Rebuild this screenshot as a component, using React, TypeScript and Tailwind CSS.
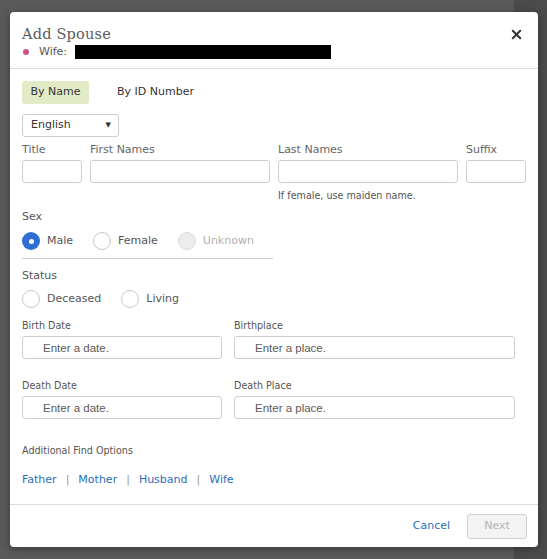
import { X } from 'lucide-react'

function Radio({
  label,
  checked,
  disabled,
}: {
  label: string
  checked?: boolean
  disabled?: boolean
}) {
  return (
    <label className="flex items-center mr-[20px]">
      {checked ? (
        <span className="w-[18px] h-[18px] rounded-full bg-[#2f6fd3] flex items-center justify-center">
          <span className="w-[5px] h-[5px] rounded-full bg-white" />
        </span>
      ) : (
        <span
          className={`w-[18px] h-[18px] rounded-full border ${
            disabled ? 'bg-[#ececec] border-[#dcdcdc]' : 'bg-white border-[#c8c8c8]'
          }`}
        />
      )}
      <span
        className={`ml-[7px] text-[11px] leading-[14px] ${
          disabled ? 'text-[#b0b0b0]' : 'text-[#555]'
        }`}
      >
        {label}
      </span>
    </label>
  )
}

function TextBox({ className = '' }: { className?: string }) {
  return (
    <input
      type="text"
      className={`h-[23px] border border-[#cfcfcf] rounded-[3px] bg-white outline-none ${className}`}
    />
  )
}

function PlaceBox({ placeholder }: { placeholder: string }) {
  return (
    <input
      type="text"
      placeholder={placeholder}
      className="h-[23px] w-full border border-[#cfcfcf] rounded-[3px] bg-white pl-[20px] outline-none font-['Liberation_Sans',Arial,sans-serif] text-[11.5px] placeholder:text-[#5a5a5a]"
    />
  )
}

export default function App() {
  const links = ['Father', 'Mother', 'Husband', 'Wife']

  return (
    <div className="w-[547px] h-[559px] overflow-hidden bg-[linear-gradient(to_right,#5a5a5a_514px,#4b4b4b_514px)] pt-[12px] pl-[10px] font-['DejaVu_Sans',sans-serif]">
      <div className="w-[528px] h-[535px] bg-white rounded-[4px] shadow-[0_2px_8px_rgba(0,0,0,0.35)] flex flex-col">
        {/* Header */}
        <div className="relative px-[12px] pt-[12px] pb-[8px] border-b border-[#dddddd]">
          <h2 className="font-['DejaVu_Serif',serif] text-[14.5px] leading-[20px] text-[#5c5c5c] tracking-[0.2px]">
            Add Spouse
          </h2>
          <div className="flex items-center h-[16px]">
            <span className="w-[6px] h-[6px] rounded-full bg-[#cf4f86] ml-[1px]" />
            <span className="ml-[10px] text-[11px] text-[#555]">Wife:</span>
            <span className="ml-[8px] w-[256px] h-[14px] bg-black" />
          </div>
          <button className="absolute right-[14px] top-[15px] text-[#333]">
            <X className="w-[15px] h-[15px]" strokeWidth={3.2} />
          </button>
        </div>

        {/* Body */}
        <div className="flex-1 px-[12px]">
          <div className="flex items-center mt-[12px]">
            <span className="h-[23px] w-[67px] rounded-[3px] bg-[#e3ebc6] flex items-center justify-center text-[11px] text-[#333]">
              By Name
            </span>
            <span className="ml-[28px] text-[11px] text-[#333]">By ID Number</span>
          </div>

          <div className="mt-[10px] w-[97px] h-[23px] border border-[#cfcfcf] rounded-[3px] flex items-center justify-between pl-[8px] pr-[7px]">
            <span className="text-[11px] text-[#333]">English</span>
            <span className="text-[7px] text-[#333] leading-none">▼</span>
          </div>

          <div className="mt-[6px] grid grid-cols-[60px_180px_180px_60px] gap-x-[8px] text-[11px] text-[#666]">
            <span className="leading-[14px]">Title</span>
            <span className="leading-[14px]">First Names</span>
            <span className="leading-[14px]">Last Names</span>
            <span className="leading-[14px]">Suffix</span>
            <TextBox className="mt-[3px] w-full" />
            <TextBox className="mt-[3px] w-full" />
            <TextBox className="mt-[3px] w-full" />
            <TextBox className="mt-[3px] w-full" />
            <span />
            <span />
            <span className="mt-[7px] text-[9.6px] leading-[12px] text-[#555]">
              If female, use maiden name.
            </span>
          </div>

          <div className="mt-[8px] text-[11px] leading-[14px] text-[#555]">Sex</div>
          <div className="mt-[8px] flex items-center">
            <Radio label="Male" checked />
            <Radio label="Female" />
            <Radio label="Unknown" disabled />
          </div>
          <div className="mt-[8px] w-[251px] border-t border-[#cccccc]" />

          <div className="mt-[10px] text-[11px] leading-[14px] text-[#555]">Status</div>
          <div className="mt-[7px] flex items-center">
            <Radio label="Deceased" />
            <Radio label="Living" />
          </div>

          <div className="mt-[12px] grid grid-cols-[200px_281px] gap-x-[12px] text-[9.6px] leading-[12px] text-[#555]">
            <span>Birth Date</span>
            <span>Birthplace</span>
            <div className="mt-[4px]">
              <PlaceBox placeholder="Enter a date." />
            </div>
            <div className="mt-[4px]">
              <PlaceBox placeholder="Enter a place." />
            </div>
            <span className="mt-[21px]">Death Date</span>
            <span className="mt-[21px]">Death Place</span>
            <div className="mt-[4px]">
              <PlaceBox placeholder="Enter a date." />
            </div>
            <div className="mt-[4px]">
              <PlaceBox placeholder="Enter a place." />
            </div>
          </div>

          <div className="mt-[26px] text-[9.6px] leading-[12px] text-[#555]">
            Additional Find Options
          </div>
          <div className="mt-[16px] flex items-center text-[11px] leading-[14px]">
            {links.map((l, i) => (
              <span key={l} className="flex items-center">
                {i > 0 && <span className="mx-[9px] text-[#999]">|</span>}
                <a className="text-[#2c6db5]">{l}</a>
              </span>
            ))}
          </div>
        </div>

        {/* Footer */}
        <div className="border-t border-[#dddddd] h-[43px] flex items-center justify-end pr-[11px]">
          <a className="text-[11px] text-[#2c6db5]">Cancel</a>
          <button className="ml-[17px] w-[60px] h-[25px] rounded-[3px] border border-[#d0d0d0] bg-[#f3f3f3] text-[11px] text-[#b5b5b5]">
            Next
          </button>
        </div>
      </div>
    </div>
  )
}
